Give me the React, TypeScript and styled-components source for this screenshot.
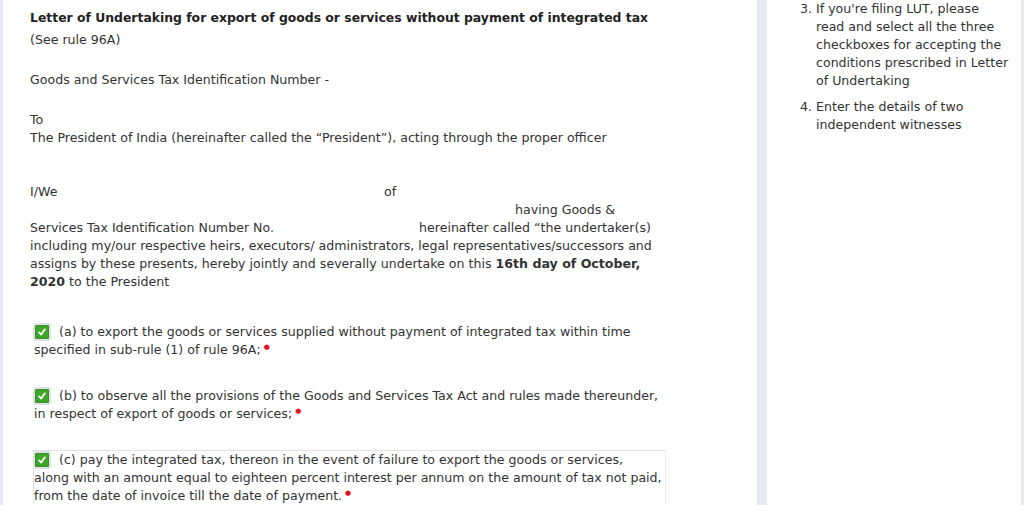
import styled, { createGlobalStyle } from "styled-components";

const GlobalStyle = createGlobalStyle`
  html, body {
    margin: 0;
    padding: 0;
    background: #ffffff;
  }

  body {
    font-family: "DejaVu Sans", Verdana, sans-serif;
    font-size: 12.6px;
    color: #333333;
  }
`;

const Frame = styled.div`
  display: flex;
  gap: 10px;

  height: 505px;
  padding: 0 3px;
  overflow: hidden;

  background: #e6eaee;
`;

const Main = styled.div`
  width: 754px;
  padding: 9px 0 0 27px;
  box-sizing: border-box;

  background: #ffffff;
  line-height: 18px;
`;

const Side = styled.div`
  flex: 1;
  background: #ffffff;
  line-height: 18px;
`;

const Steps = styled.ol`
  margin: 0;
  padding: 0 0 0 49px;
`;

const Step = styled.li`
  margin-bottom: 8px;
  padding-right: 12px;
`;

const Title = styled.div`
  font-size: 12.4px;
  font-weight: 700;
  color: #222222;
`;

const Line = styled.div<{ $gap?: number; $indent?: number }>`
  margin-top: ${({ $gap = 0 }) => $gap}px;
  padding-left: ${({ $indent = 0 }) => $indent}px;
  white-space: nowrap;
`;

const FieldRow = styled.div<{ $gap?: number; $labelWidth: number }>`
  display: flex;
  margin-top: ${({ $gap = 0 }) => $gap}px;
  white-space: nowrap;

  & > span:first-child {
    width: ${({ $labelWidth }) => $labelWidth}px;
    flex-shrink: 0;
  }
`;

const Item = styled.div<{ $gap: number; $framed?: boolean }>`
  width: 633px;
  margin: ${({ $gap }) => $gap}px 0 0 3px;
  border: 1px solid ${({ $framed }) => ($framed ? "#e2e2e2" : "transparent")};
  border-right-color: ${({ $framed }) => ($framed ? "#eeeeee" : "transparent")};
  box-sizing: border-box;
  line-height: 18px;
  white-space: nowrap;
`;

const Check = styled.span`
  display: inline-block;
  vertical-align: middle;
  position: relative;
  top: -1px;

  width: 14px;
  height: 14px;
  margin: 0 10px 0 1px;
  box-sizing: border-box;

  background: #3fa628;
  border: 1px solid #37932a;
  box-shadow: 0 0 0 2px #e1e1e1;
  border-radius: 1px;

  & > svg {
    display: block;
    margin: 1px;
  }
`;

const Required = styled.span`
  color: #e0141e;
  font-size: 7px;
  line-height: 1;
  vertical-align: 5px;
  margin-left: 3px;
`;

function Tick() {
  return (
    <Check>
      <svg width="10" height="10" viewBox="0 0 10 10">
        <path
          d="M2.2 5.4 L4.2 7.6 L7.9 2.3"
          fill="none"
          stroke="#ffffff"
          strokeWidth="1.7"
          strokeLinecap="round"
          strokeLinejoin="round"
        />
      </svg>
    </Check>
  );
}

export default function App() {
  return (
    <>
      <GlobalStyle />
      <Frame>
        <Main>
          <Title>
            Letter of Undertaking for export of goods or services without
            payment of integrated tax
          </Title>
          <Line $gap={4}>(See rule 96A)</Line>
          <Line $gap={22}>Goods and Services Tax Identification Number -</Line>
          <Line $gap={22}>To</Line>
          <Line>
            The President of India (hereinafter called the “President”),
            acting through the proper officer
          </Line>

          <FieldRow $gap={36} $labelWidth={354}>
            <span>I/We</span>
            <span>of</span>
          </FieldRow>
          <Line $indent={485}>having Goods &amp;</Line>
          <FieldRow $labelWidth={389}>
            <span>Services Tax Identification Number No.</span>
            <span>hereinafter called “the undertaker(s)</span>
          </FieldRow>
          <Line>
            including my/our respective heirs, executors/ administrators, legal
            representatives/successors and
          </Line>
          <Line>
            assigns by these presents, hereby jointly and severally undertake
            on this <b>16th day of October,</b>
          </Line>
          <Line>
            <b>2020</b> to the President
          </Line>

          <Item $gap={31}>
            <Tick />
            (a) to export the goods or services supplied without payment of
            integrated tax within time
            <br />
            specified in sub-rule (1) of rule 96A;
            <Required>●</Required>
          </Item>
          <Item $gap={26}>
            <Tick />
            (b) to observe all the provisions of the Goods and Services Tax Act
            and rules made thereunder,
            <br />
            in respect of export of goods or services;
            <Required>●</Required>
          </Item>
          <Item $gap={26} $framed>
            <Tick />
            (c) pay the integrated tax, thereon in the event of failure to
            export the goods or services,
            <br />
            along with an amount equal to eighteen percent interest per annum
            on the amount of tax not paid,
            <br />
            from the date of invoice till the date of payment.
            <Required>●</Required>
          </Item>
        </Main>

        <Side>
          <Steps start={3}>
            <Step>
              If you're filing LUT, please read and select all the three
              checkboxes for accepting the conditions prescribed in Letter of
              Undertaking
            </Step>
            <Step>Enter the details of two independent witnesses</Step>
          </Steps>
        </Side>
      </Frame>
    </>
  );
}
